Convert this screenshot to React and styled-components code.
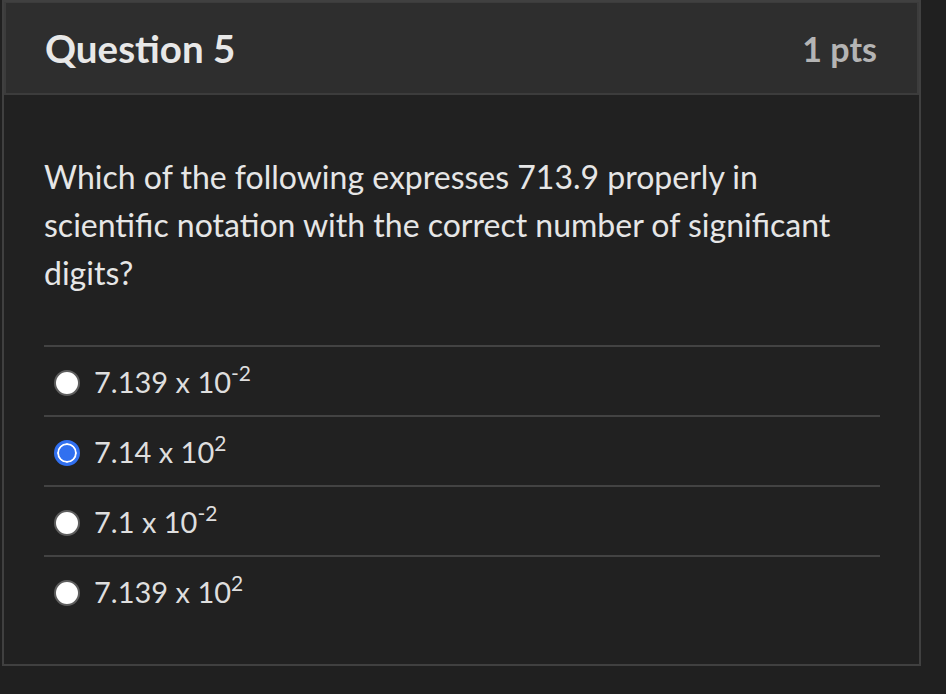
import React from "react";
import styled, { createGlobalStyle } from "styled-components";

const GlobalStyle = createGlobalStyle`
  html, body {
    margin: 0;
    padding: 0;
    background: #202020;
  }
  body {
    font-family: Lato, "Noto Sans", sans-serif;
    -webkit-font-smoothing: antialiased;
  }
`;

const Panel = styled.div`
  box-sizing: border-box;
  width: 919px;
  margin-left: 2px;
  background: #212121;
  border: 2px solid #404040;
`;

const Header = styled.div`
  box-sizing: border-box;
  height: 93px;
  display: flex;
  align-items: center;
  justify-content: space-between;
  padding: 0 40px 0 39px;
  background: #2e2e2e;
  border: 2px solid #3c3c3c;
  border-top-width: 1px;
`;

const Title = styled.h2`
  margin: 0;
  font-size: 38.5px;
  font-weight: 700;
  color: #e8e8e8;
`;

const Points = styled.span`
  font-size: 34px;
  font-weight: 700;
  color: #b4b4b4;
`;

const Body = styled.div`
  padding: 58px 39px 39px 40px;
`;

const Prompt = styled.p`
  margin: 0 0 48px;
  font-size: 32px;
  line-height: 48px;
  color: #e6e6e6;
`;

const Answers = styled.ul`
  list-style: none;
  margin: 0;
  padding: 0;
`;

const Answer = styled.li`
  box-sizing: border-box;
  height: 70px;
  display: flex;
  align-items: center;
  gap: 14px;
  padding-left: 10px;
  border-top: 2px solid #434343;
`;

const Radio = styled.span`
  box-sizing: border-box;
  flex: none;
  width: 26px;
  height: 26px;
  margin-top: 4px;
  border-radius: 50%;
  border: ${(p) => (p.$checked ? "3px solid #3170f0" : "2px solid #5e5e5e")};
  background: ${(p) => (p.$checked ? "#3170f0" : "#ffffff")};
  box-shadow: ${(p) => (p.$checked ? "inset 0 0 0 2px #ffffff" : "none")};
`;

const Label = styled.span`
  font-size: 29px;
  color: #dedede;
`;

const Sup = styled.sup`
  font-size: 21px;
  line-height: 0;
  vertical-align: 12px;
`;

const answers = [
  { base: "7.139 x 10", exp: "-2" },
  { base: "7.14 x 10", exp: "2", checked: true },
  { base: "7.1 x 10", exp: "-2" },
  { base: "7.139 x 10", exp: "2" },
];

const App = () => {
  return (
    <>
      <GlobalStyle />
      <Panel>
        <Header>
          <Title>Question 5</Title>
          <Points>1 pts</Points>
        </Header>
        <Body>
          <Prompt>
            Which of the following expresses 713.9 properly in
            <br />
            scientific notation with the correct number of significant
            <br />
            digits?
          </Prompt>
          <Answers>
            {answers.map((a, i) => (
              <Answer key={i}>
                <Radio $checked={a.checked} />
                <Label>
                  {a.base}
                  <Sup>{a.exp}</Sup>
                </Label>
              </Answer>
            ))}
          </Answers>
        </Body>
      </Panel>
    </>
  );
};

export default App;
